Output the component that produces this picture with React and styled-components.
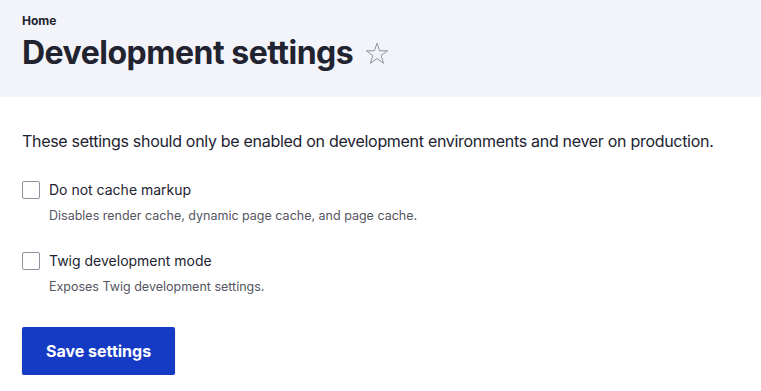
import React from "react";
import styled, { createGlobalStyle } from "styled-components";

const Global = createGlobalStyle`
  html, body { margin: 0; padding: 0; background: #fff; }
  body { font-family: Inter, "Noto Sans", sans-serif; color: #222330; -webkit-font-smoothing: antialiased; }
`;

const Header = styled.header`
  background: #f3f4f9;
  padding: 12px 22px 24px;
`;

const Crumb = styled.div`
  font-size: 12px;
  line-height: 18px;
  font-weight: 700;
  color: #222330;
`;

const TitleRow = styled.div`
  display: flex;
  align-items: center;
  gap: 11px;
  margin-top: 3px;
`;

const Title = styled.h1`
  margin: 0;
  font-size: 32px;
  line-height: 40px;
  font-weight: 700;
  letter-spacing: -0.5px;
  color: #222330;
`;

const StarButton = styled.span`
  display: inline-flex;
  width: 26px;
  height: 26px;
  margin-top: 2px;
`;

const Main = styled.main`
  padding: 32px 22px 0;
`;

const Intro = styled.p`
  margin: 0 0 25px;
  font-size: 16px;
  line-height: 24px;
  letter-spacing: -0.3px;
  white-space: nowrap;
`;

const Item = styled.div`
  margin-bottom: 23px;
`;

const CheckRow = styled.label`
  display: flex;
  align-items: center;
  gap: 9px;
  font-size: 14px;
  line-height: 24px;
`;

const Box = styled.span`
  width: 18px;
  height: 18px;
  box-sizing: border-box;
  border: 1px solid #8e929c;
  border-radius: 2px;
  background: #fff;
  flex: none;
`;

const Description = styled.div`
  margin: 4px 0 0 27px;
  font-size: 12.5px;
  line-height: 20px;
  color: #545560;
`;

const Button = styled.button`
  margin-top: 7px;
  height: 48px;
  padding: 0 24px;
  border: none;
  border-radius: 2px;
  background: #153ac4;
  color: #fff;
  font-family: inherit;
  font-size: 16px;
  font-weight: 700;
  box-shadow: 0 1px 2px rgba(0, 0, 0, 0.2);
`;

const Star = () => (
  <svg width="26" height="26" viewBox="0 0 26 26" fill="none">
    <path
      d="M13 2.2l2.6 7.6h8l-6.5 4.8 2.5 7.7L13 17.5l-6.6 4.8 2.5-7.7-6.5-4.8h8z"
      stroke="#8e929c"
      strokeWidth="1"
      strokeLinejoin="miter"
    />
  </svg>
);

const options = [
  { label: "Do not cache markup", desc: "Disables render cache, dynamic page cache, and page cache." },
  { label: "Twig development mode", desc: "Exposes Twig development settings." },
];

export default function App() {
  return (
    <>
      <Global />
      <Header>
        <Crumb>Home</Crumb>
        <TitleRow>
          <Title>Development settings</Title>
          <StarButton><Star /></StarButton>
        </TitleRow>
      </Header>
      <Main>
        <Intro>These settings should only be enabled on development environments and never on production.</Intro>
        {options.map((o) => (
          <Item key={o.label}>
            <CheckRow>
              <Box />
              {o.label}
            </CheckRow>
            <Description>{o.desc}</Description>
          </Item>
        ))}
        <Button>Save settings</Button>
      </Main>
    </>
  );
}
